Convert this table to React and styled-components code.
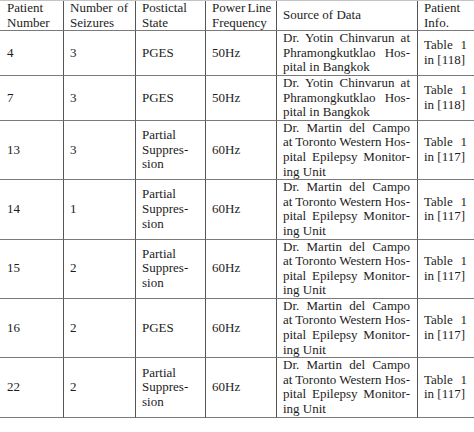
import React from "react";
import styled, { createGlobalStyle } from "styled-components";

const Global = createGlobalStyle`
  html, body { margin: 0; padding: 0; background: #fff; overflow: hidden; }
  body { font-family: "Liberation Serif", "Times New Roman", serif; }
`;

const Table = styled.div`
  display: grid;
  grid-template-columns: 63px 72px 70px 71px 141px 57px;
  width: 474px;
  border-top: 1px solid #c4c4c4;
  color: #1c1c1c;
  font-size: 13px;
  line-height: 14.6px;
`;

const Cell = styled.div`
  display: flex;
  flex-direction: column;
  justify-content: center;
  box-sizing: border-box;
  padding: 0 7px 0 ${(p) => (p.$first ? 7 : 6)}px;
  border-left: ${(p) => (p.$first ? "none" : "1px solid #555")};
  border-bottom: 1px solid #7a7a7a;
  min-width: 0;
`;

const Line = styled.div`
  white-space: nowrap;
  text-align: ${(p) => (p.$justify ? "justify" : "left")};
  text-align-last: ${(p) => (p.$justify ? "justify" : "left")};
  word-spacing: ${(p) => (p.$justify ? "-1px" : "0")};
`;

// each cell: array of lines; a leading "|" marks a justified line
const header = [
  ["Patient", "Number"],
  ["|Number of", "Seizures"],
  ["Postictal", "State"],
  ["|Power Line", "Frequency"],
  ["Source of Data"],
  ["Patient", "Info."],
];

const bangkok = ["|Dr. Yotin Chinvarun at", "|Phramongkutklao Hos-", "pital in Bangkok"];
const toronto = [
  "|Dr. Martin del Campo",
  "|at Toronto Western Hos-",
  "|pital Epilepsy Monitor-",
  "ing Unit",
];
const partial = ["Partial", "Suppres-", "sion"];

const rows = [
  [["4"], ["3"], ["PGES"], ["50Hz"], bangkok, ["|Table 1", "in [118]"]],
  [["7"], ["3"], ["PGES"], ["50Hz"], bangkok, ["|Table 1", "in [118]"]],
  [["13"], ["3"], partial, ["60Hz"], toronto, ["|Table 1", "in [117]"]],
  [["14"], ["1"], partial, ["60Hz"], toronto, ["|Table 1", "in [117]"]],
  [["15"], ["2"], partial, ["60Hz"], toronto, ["|Table 1", "in [117]"]],
  [["16"], ["2"], ["PGES"], ["60Hz"], toronto, ["|Table 1", "in [117]"]],
  [["22"], ["2"], partial, ["60Hz"], toronto, ["|Table 1", "in [117]"]],
];

function renderRow(cells, r) {
  return cells.map((lines, c) => (
    <Cell key={`${r}-${c}`} $first={c === 0}>
      {lines.map((l, i) => {
        const j = l.startsWith("|");
        return (
          <Line key={i} $justify={j}>
            {j ? l.slice(1) : l}
          </Line>
        );
      })}
    </Cell>
  ));
}

export default function App() {
  return (
    <>
      <Global />
      <Table>
        {renderRow(header, "h")}
        {rows.map((row, r) => renderRow(row, r))}
      </Table>
    </>
  );
}
